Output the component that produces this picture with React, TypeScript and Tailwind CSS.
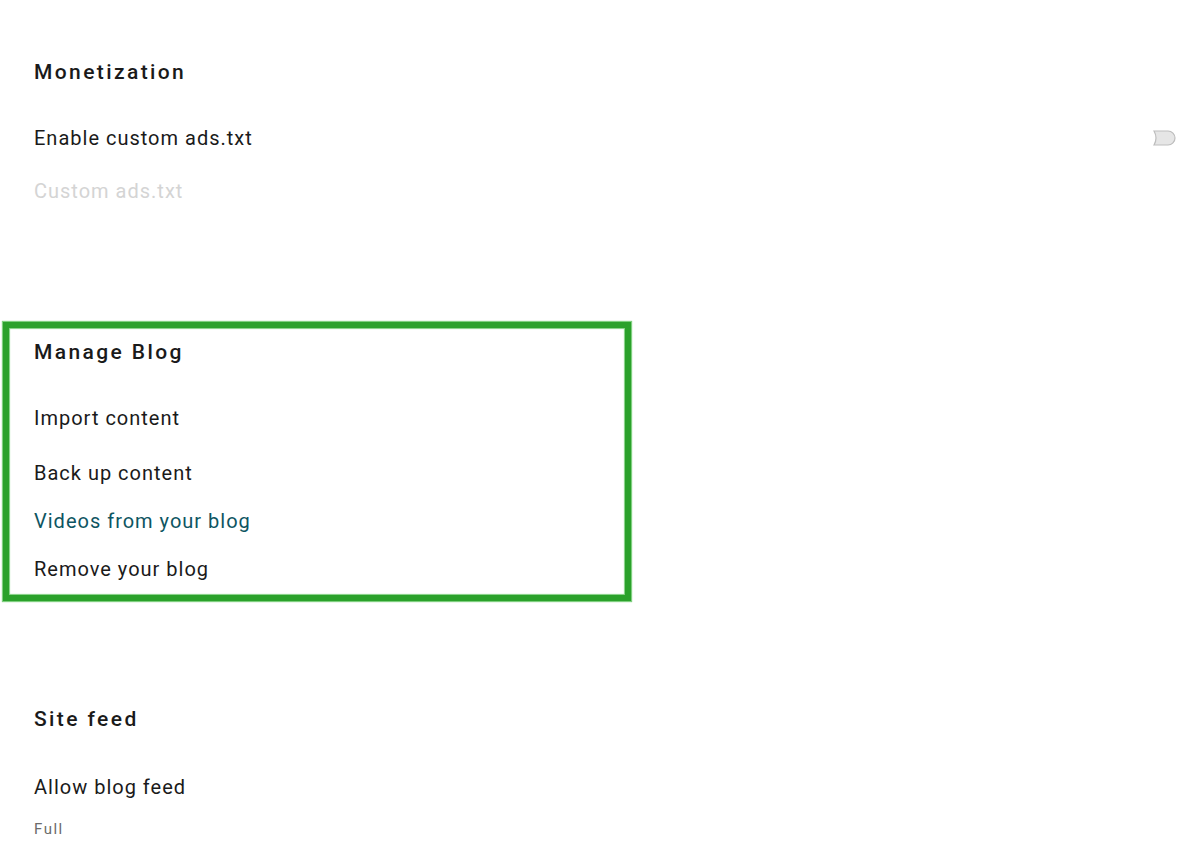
import React from "react";

const font = { fontFamily: "Roboto, 'Noto Sans', sans-serif" };

const Toggle = () => (
  <svg width="26" height="18" viewBox="0 0 26 18" className="shrink-0">
    <path
      d="M3 2 H17 A7 7 0 0 1 17 16 H3 Q7 9 3 2 Z"
      fill="#e6e6e6"
      stroke="#bdbdbd"
      strokeWidth="1.2"
    />
  </svg>
);

export default function App() {
  const heading = "text-[21px] leading-[28px] font-medium tracking-[2.4px] text-[#1a1a1a]";
  const item = "text-[20px] leading-[28px] tracking-[1px] text-[#1a1a1a]";

  return (
    <div className="w-[1199px] h-[851px] bg-white overflow-hidden" style={font}>
      {/* Monetization */}
      <section className="pl-[34px] pr-[22px] pt-[58px]">
        <h2 className={heading}>Monetization</h2>
        <div className="mt-[38px] flex items-center justify-between">
          <span className={item}>Enable custom ads.txt</span>
          <Toggle />
        </div>
        <div className="mt-[25px] text-[20px] leading-[28px] tracking-[1px] text-[#d4d4d4]">
          Custom ads.txt
        </div>
      </section>

      {/* Manage Blog */}
      <section className="ml-[3px] mt-[117px] w-[628px] border-[6px] border-[#2ba12b] shadow-[0_0_1px_1px_#7fcf7f,inset_0_0_1px_1px_#7fcf7f] pl-[25px] pt-[10px] pb-[12px]">
        <h2 className={heading}>Manage Blog</h2>
        <div className={`mt-[38px] ${item}`}>Import content</div>
        <div className={`mt-[27px] ${item}`}>Back up content</div>
        <div className="mt-[20px] text-[20px] leading-[28px] tracking-[1px] text-[#0e5562]">
          Videos from your blog
        </div>
        <div className={`mt-[20px] ${item}`}>Remove your blog</div>
      </section>

      {/* Site feed */}
      <section className="pl-[34px] pt-[104px]">
        <h2 className={heading}>Site feed</h2>
        <div className={`mt-[40px] ${item}`}>Allow blog feed</div>
        <div className="mt-[18px] text-[15px] leading-[20px] tracking-[1.5px] text-[#6b6b6b]">
          Full
        </div>
      </section>
    </div>
  );
}
